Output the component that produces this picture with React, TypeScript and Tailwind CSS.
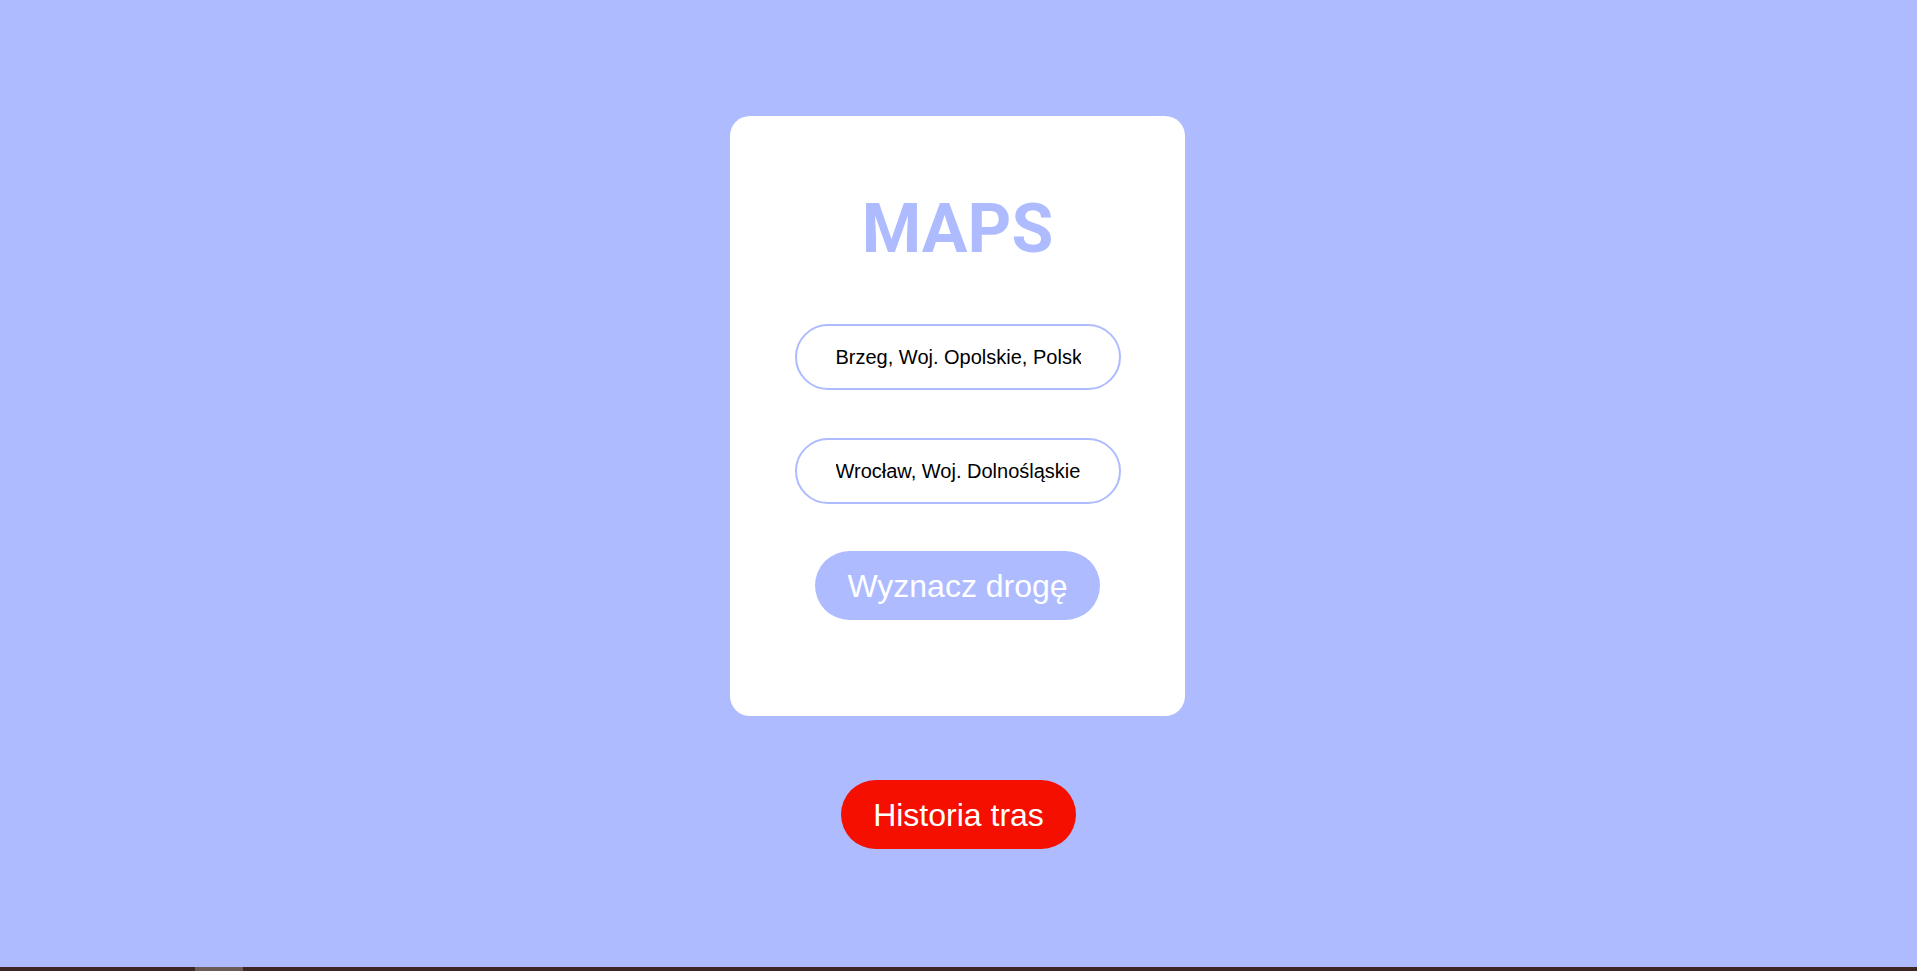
import React, { useState } from 'react';

export default function App() {
  const [from, setFrom] = useState('Brzeg, Woj. Opolskie, Polska');
  const [to, setTo] = useState('Wrocław, Woj. Dolnośląskie, Polska');

  return (
    <div className="h-[971px] flex flex-col overflow-hidden">
      <main className="flex-1 bg-[#aebcff] flex flex-col items-center pt-[116px]">
        {/* Card */}
        <div className="w-[455px] h-[600px] -translate-x-[1px] bg-white rounded-[20px] flex flex-col items-center pt-[79px]">
          <h1 className="font-['Roboto',sans-serif] font-bold text-[68px] leading-none text-[#aebcff]">
            MAPS
          </h1>

          <input
            value={from}
            onChange={(e) => setFrom(e.target.value)}
            className="mt-[61px] w-[326px] h-[66px] pl-[39px] pr-[38px] rounded-full border-2 border-[#aebcff] bg-white text-black text-[20px] font-['Liberation_Sans',Arial,sans-serif] outline-none"
          />
          <input
            value={to}
            onChange={(e) => setTo(e.target.value)}
            className="mt-[48px] w-[326px] h-[66px] pl-[39px] pr-[38px] rounded-full border-2 border-[#aebcff] bg-white text-black text-[20px] font-['Liberation_Sans',Arial,sans-serif] outline-none"
          />

          <button className="mt-[47px] h-[69px] px-[32px] rounded-full bg-[#aebcff] text-white text-[32px] font-['Liberation_Sans',Arial,sans-serif]">
            Wyznacz drogę
          </button>
        </div>

        <button className="mt-[64px] h-[69px] px-[32px] rounded-full bg-[#f50f00] text-white text-[32px] font-['Liberation_Sans',Arial,sans-serif]">
          Historia tras
        </button>
      </main>
      {/* scrollbar strip */}
      <div className="h-[4px] bg-[#3e2622] flex">
        <div className="ml-[195px] w-[48px] bg-[#6c5a57]" />
      </div>
    </div>
  );
}
